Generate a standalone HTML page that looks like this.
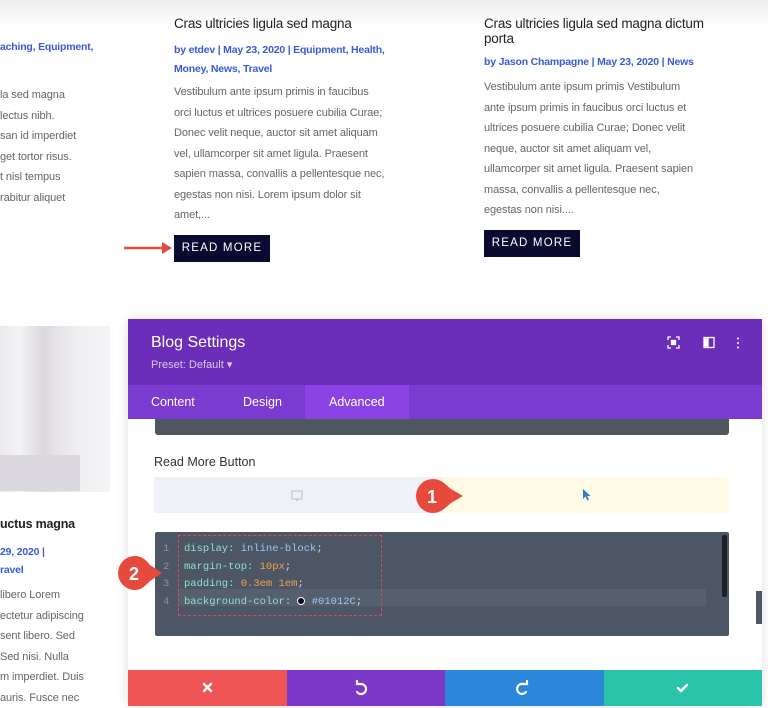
<!DOCTYPE html>
<html><head><meta charset="utf-8"><style>
*{margin:0;padding:0;box-sizing:border-box}
body{width:768px;height:708px;overflow:hidden;background:#fff;font-family:"Liberation Sans",sans-serif;position:relative}
.a{position:absolute;white-space:nowrap}
.t{font-size:13.5px;color:#222;letter-spacing:-0.2px}
.m{font-size:10.5px;color:#3a5bd6;font-weight:bold;letter-spacing:-0.2px}
.b{font-size:11px;color:#666;letter-spacing:-0.1px}
.btn{position:absolute;background:#0b0a30;color:#fff;font-size:11.5px;letter-spacing:1.2px;text-align:center;line-height:27px;width:96px;height:27px}
.code{font-family:"Liberation Mono",monospace;font-size:10.5px}
</style></head><body>
<div class="a" style="left:0;top:0;width:768px;height:28px;background:linear-gradient(#eee,#fff)"></div>

<div class="a m" style="left:0;top:41px">aching, Equipment,</div>
<div class="a b" style="left:0;top:85px;line-height:20.5px">la sed magna<br>lectus nibh.<br>san id imperdiet<br>get tortor risus.<br>t nisl tempus<br>rabitur aliquet</div>

<div class="a t" style="left:174px;top:16px">Cras ultricies ligula sed magna</div>
<div class="a m" style="left:174px;top:41px;line-height:19px">by etdev | May 23, 2020 | Equipment, Health,<br>Money, News, Travel</div>
<div class="a b" style="left:174px;top:82px;line-height:20.5px">Vestibulum ante ipsum primis in faucibus<br>orci luctus et ultrices posuere cubilia Curae;<br>Donec velit neque, auctor sit amet aliquam<br>vel, ullamcorper sit amet ligula. Praesent<br>sapien massa, convallis a pellentesque nec,<br>egestas non nisi. Lorem ipsum dolor sit<br>amet,...</div>
<div class="btn" style="left:174px;top:235px">READ MORE</div>
<svg class="a" style="left:124px;top:241px" width="50" height="14"><line x1="0" y1="7" x2="40" y2="7" stroke="#e8493d" stroke-width="2.5"/><polygon points="38,1 48,7 38,13" fill="#e8493d"/></svg>

<div class="a t" style="left:484px;top:16px;line-height:15px">Cras ultricies ligula sed magna dictum<br>porta</div>
<div class="a m" style="left:484px;top:56px">by Jason Champagne | May 23, 2020 | News</div>
<div class="a b" style="left:484px;top:77px;line-height:20.5px">Vestibulum ante ipsum primis Vestibulum<br>ante ipsum primis in faucibus orci luctus et<br>ultrices posuere cubilia Curae; Donec velit<br>neque, auctor sit amet aliquam vel,<br>ullamcorper sit amet ligula. Praesent sapien<br>massa, convallis a pellentesque nec,<br>egestas non nisi....</div>
<div class="btn" style="left:484px;top:230px">READ MORE</div>

<div class="a" style="left:0;top:326px;width:110px;height:166px;background:linear-gradient(90deg,#eceaee 0%,#f3f2f4 18%,#dcd8de 40%,#e7e4e9 52%,#f1f0f2 75%,#f4f3f5 100%)"></div>
<div class="a" style="left:0;top:455px;width:80px;height:36px;background:#dcd8df"></div>
<div class="a t" style="left:0;top:517px;font-weight:bold;font-size:12.5px">uctus magna</div>
<div class="a m" style="left:0;top:543px;line-height:18px">29, 2020 |<br>ravel</div>
<div class="a b" style="left:0;top:585px;line-height:20.5px">libero Lorem<br>ectetur adipiscing<br>sent libero. Sed<br>Sed nisi. Nulla<br>m imperdiet. Duis<br>auris. Fusce nec</div>

<div class="a" style="left:128px;top:319px;width:634px;height:387px;background:#fff;box-shadow:0 0 12px rgba(0,0,0,.12)"></div>
<div class="a" style="left:128px;top:319px;width:634px;height:66px;background:#6c2eb9"></div>
<div class="a" style="left:151px;top:334px;color:#fff;font-size:16px">Blog Settings</div>
<div class="a" style="left:151px;top:358px;color:#d9c8f0;font-size:11px">Preset: Default ▾</div>
<svg class="a" style="left:667px;top:336px" width="80" height="14" fill="none" stroke="#fff" stroke-width="1.3">
<path d="M1 4V1h3M9 1h3v3M12 9v3H9M4 12H1V9"/><rect x="4.5" y="4.5" width="4" height="4" fill="#fff"/>
<rect x="37" y="1.5" width="10" height="10"/><line x1="41" y1="1.5" x2="41" y2="11.5"/><rect x="38" y="3" width="2" height="7" fill="#fff"/>
<circle cx="71" cy="2.5" r="1" fill="#fff" stroke="none"/><circle cx="71" cy="7" r="1" fill="#fff" stroke="none"/><circle cx="71" cy="11.5" r="1" fill="#fff" stroke="none"/></svg>
<div class="a" style="left:128px;top:385px;width:634px;height:34px;background:#7b3bd0"></div>
<div class="a" style="left:305px;top:385px;width:104px;height:34px;background:#8c43e6"></div>
<div class="a" style="left:151px;top:395px;color:#fff;font-size:12.5px">Content</div>
<div class="a" style="left:243px;top:395px;color:#fff;font-size:12.5px">Design</div>
<div class="a" style="left:329px;top:395px;color:#fff;font-size:12.5px">Advanced</div>
<div class="a" style="left:155px;top:419px;width:574px;height:16px;background:#4e5660;border-radius:0 0 3px 3px"></div>
<div class="a" style="left:154px;top:455px;color:#333;font-size:12.5px">Read More Button</div>
<div class="a" style="left:154px;top:477px;width:290px;height:36px;background:#eef1f6"></div>
<div class="a" style="left:443px;top:477px;width:286px;height:36px;background:#fffbe6"></div>
<svg class="a" style="left:291px;top:490px" width="12" height="12"><rect x="1" y="1" width="10" height="8" fill="none" stroke="#c3c8cf" stroke-width="1.2"/><rect x="5" y="9" width="2" height="2" fill="#c3c8cf"/></svg>
<svg class="a" style="left:581px;top:488px" width="10" height="14"><path d="M2 1v10l2.5-2.5 2 4 1.5-.7-2-3.8h3.5z" fill="#2a7fc8"/></svg>
<svg class="a" style="left:412px;top:477px" width="52" height="38"><path d="M21 2a17 17 0 1 0 0 34c8 0 13-6 18-10l12-7-12-7C34 8 29 2 21 2z" fill="#e8493d"/><text x="20" y="26" fill="#fff" font-size="18" font-family="Liberation Sans" text-anchor="middle" font-weight="bold">1</text></svg>

<div class="a" style="left:155px;top:532px;width:574px;height:104px;background:#4d5664;border-radius:2px"></div>
<div class="a" style="left:178px;top:589px;width:528px;height:17px;background:#555f6d"></div>
<div class="a" style="left:722px;top:535px;width:5px;height:62px;background:#1d2026;border-radius:2px"></div>
<div class="a" style="left:756px;top:591px;width:6px;height:33px;background:#4d5664"></div>
<div class="a code" style="left:163px;top:541px;color:#8a94a0;line-height:17.5px">1<br>2<br>3<br>4</div>
<div class="a code" style="left:184px;top:541px;line-height:17.5px;color:#8fe0c8">display: <span style="color:#9ec5f5">inline-block</span><span style="color:#ddd">;</span><br>margin-top: <span style="color:#f0a24a">10px</span><span style="color:#ddd">;</span><br>padding: <span style="color:#f0a24a">0.3em 1em</span><span style="color:#ddd">;</span><br>background-color: <span style="display:inline-block;width:8px;height:8px;border-radius:50%;background:#01012c;border:1px solid #fff;vertical-align:-1px"></span> <span style="color:#9ec5f5">#01012C</span><span style="color:#ddd">;</span></div>
<div class="a" style="left:178px;top:535px;width:204px;height:81px;border:1.5px dashed #e0455a"></div>
<svg class="a" style="left:115px;top:554px" width="50" height="38"><path d="M20 2a17 17 0 1 0 0 34c7 0 11-5 15-9l12-8-12-8C31 6 27 2 20 2z" fill="#e8493d"/><text x="19" y="26" fill="#fff" font-size="18" font-family="Liberation Sans" text-anchor="middle" font-weight="bold">2</text></svg>

<div class="a" style="left:128px;top:670px;width:159px;height:36px;background:#ef5555"></div>
<div class="a" style="left:287px;top:670px;width:158px;height:36px;background:#7b38c9"></div>
<div class="a" style="left:445px;top:670px;width:159px;height:36px;background:#2b87da"></div>
<div class="a" style="left:604px;top:670px;width:158px;height:36px;background:#29c4a9"></div>
<svg class="a" style="left:128px;top:670px" width="634" height="36" fill="none" stroke="#fff" stroke-width="2.4" stroke-linecap="round">
<path d="M76 14l7 7M83 14l-7 7"/>
<path d="M233 14a5 5 0 1 1-4 8M233 14h-4v-3" stroke-width="2.2"/>
<path d="M395 14a5 5 0 1 0 3 8M395 14h4v-3" stroke-width="2.2"/>
<path d="M550 18l3 3 6-6"/>
</svg>
</body></html>
